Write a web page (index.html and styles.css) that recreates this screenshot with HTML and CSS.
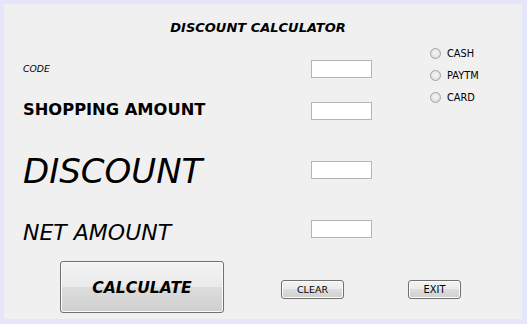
FILE: index.html
```html
<!DOCTYPE html>
<html lang="en">
<head>
    <meta charset="UTF-8">
    <meta name="viewport" content="width=device-width, initial-scale=1.0">
    <link rel="stylesheet" href="styles.css">
    <title>Discount Calculator</title>
</head>
<body>
    <div class="window">
        <div class="panel">
            <h1 class="title">DISCOUNT CALCULATOR</h1>

            <div class="body">
                <!-- Campos del formulario -->
                <div class="fields">
                    <div class="row row-code">
                        <label class="lbl lbl-code" for="code">CODE</label>
                        <input type="text" id="code">
                    </div>
                    <div class="row row-shop">
                        <label class="lbl lbl-shop" for="shop">SHOPPING AMOUNT</label>
                        <input type="text" id="shop">
                    </div>
                    <div class="row row-disc">
                        <label class="lbl lbl-disc" for="disc">DISCOUNT</label>
                        <input type="text" id="disc">
                    </div>
                    <div class="row row-net">
                        <label class="lbl lbl-net" for="net">NET AMOUNT</label>
                        <input type="text" id="net">
                    </div>
                </div>

                <!-- Forma de pago -->
                <div class="payment">
                    <label class="opt"><span class="radio"></span>CASH</label>
                    <label class="opt"><span class="radio"></span>PAYTM</label>
                    <label class="opt"><span class="radio"></span>CARD</label>
                </div>
            </div>

            <div class="actions">
                <button class="btn btn-calc">CALCULATE</button>
                <button class="btn btn-clear">CLEAR</button>
                <button class="btn btn-exit">EXIT</button>
            </div>
        </div>
    </div>
</body>
</html>
```

FILE: styles.css
```css
body {
    margin: 0;
    padding: 0;
    font-family: 'DejaVu Sans', sans-serif;
    background-color: #e6e6fa;
}

.window {
    padding: 4px 5px 5px 4px;
}

.panel {
    box-sizing: border-box;
    width: 518px;
    height: 315px;
    padding-top: 16px;
    background-color: #f0f0f0;
}

.title {
    margin: 0;
    padding-right: 10px;
    height: 16px;
    line-height: 16px;
    font-size: 13px;
    font-weight: bold;
    font-style: italic;
    text-align: center;
    color: #000;
}

.body {
    display: flex;
    align-items: flex-start;
}

.fields {
    padding: 24px 0 0 19px;
}

.row {
    display: flex;
    align-items: center;
    height: 18px;
}

.row-shop {
    margin-top: 24px;
}

.row-disc,
.row-net {
    margin-top: 41px;
}

.lbl {
    flex: 0 0 288px;
    color: #000;
    white-space: nowrap;
    line-height: 1;
}

.lbl-code {
    font-size: 9.3px;
    font-style: italic;
}

.lbl-shop {
    font-size: 16.3px;
    font-weight: bold;
    margin-bottom: 1px;
}

.lbl-disc {
    font-size: 34px;
    font-style: italic;
    margin-top: 2px;
}

.lbl-net {
    font-size: 22px;
    font-style: italic;
    margin-top: 7px;
}

input[type="text"] {
    box-sizing: border-box;
    flex: 0 0 61px;
    width: 61px;
    height: 18px;
    margin: 0;
    padding: 1px 3px;
    border: 1px solid #b5b5b5;
    background-color: #fff;
    font-size: 11px;
}

/* Opciones de pago */
.payment {
    margin-left: 58px;
    padding-top: 6px;
}

.opt {
    display: flex;
    align-items: center;
    height: 22px;
    font-size: 9.8px;
    color: #000;
}

.radio {
    box-sizing: border-box;
    width: 11px;
    height: 11px;
    margin-right: 6px;
    border: 1px solid #a4a4a4;
    border-radius: 50%;
    background: radial-gradient(circle at 50% 45%, #f6f6f6 0, #e9e9e9 45%, #cfcfcf 100%);
}

/* Botones */
.actions {
    display: flex;
    align-items: flex-start;
    margin-top: 23px;
    padding-left: 56px;
}

.btn {
    box-sizing: border-box;
    margin: 0;
    padding: 0;
    border: 1px solid #707070;
    border-radius: 3px;
    background: linear-gradient(#f2f2f2 0%, #ebebeb 49%, #dddddd 50%, #cfcfcf 100%);
    box-shadow: inset 0 0 0 1px #fbfbfb;
    font-family: 'DejaVu Sans', sans-serif;
    color: #000;
    cursor: pointer;
}

.btn-calc {
    width: 164px;
    height: 52px;
    padding-top: 2px;
    font-size: 15.6px;
    font-weight: bold;
    font-style: italic;
}

.btn-clear {
    width: 63px;
    height: 19px;
    margin: 19px 0 0 57px;
    font-size: 9.5px;
}

.btn-exit {
    width: 53px;
    height: 19px;
    margin: 19px 0 0 64px;
    font-size: 9.8px;
}
```
